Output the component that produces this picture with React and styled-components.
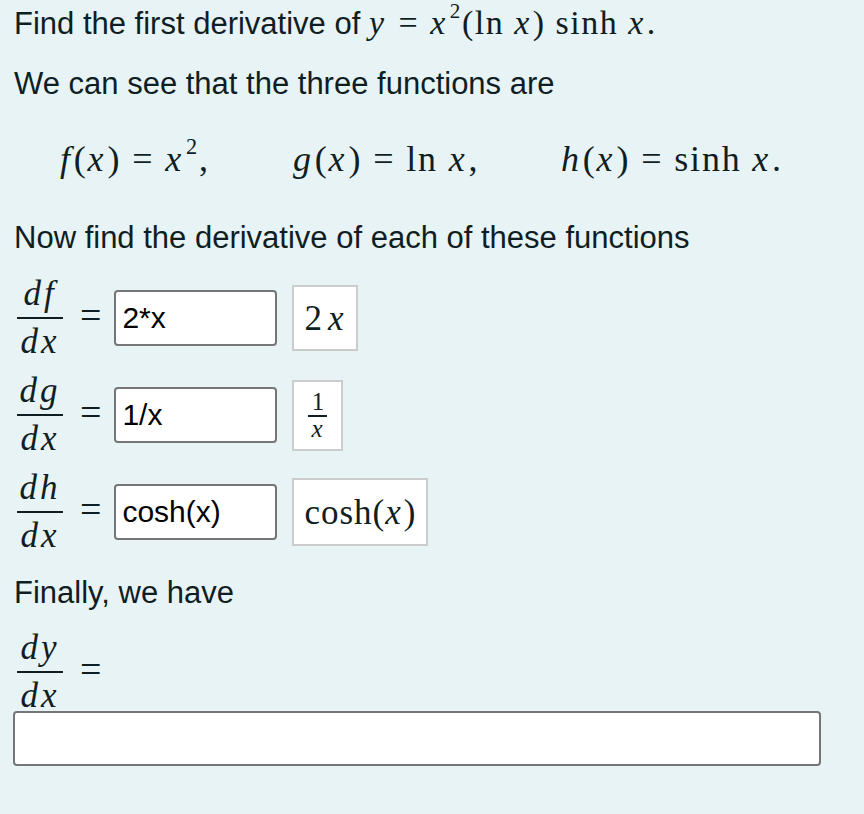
import React from "react";
import styled, { createGlobalStyle } from "styled-components";

const GlobalStyle = createGlobalStyle`
  html, body {
    margin: 0;
    padding: 0;
    background: #e8f3f5;
  }
  body {
    font-family: "Liberation Sans", Arial, sans-serif;
    color: #0f1e23;
  }
`;

const Page = styled.main`
  padding: 4px 14px 0 14px;
  min-height: 814px;
  box-sizing: border-box;
`;

const Para = styled.p`
  margin: ${(p) => p.$mt || 0}px 0 0 0;
  font-size: 31px;
  line-height: 40px;
  white-space: nowrap;
`;

const MathSpan = styled.span`
  font-family: "Liberation Serif", "Times New Roman", serif;
  font-size: 34px;
  line-height: 1;
  letter-spacing: 1.5px;
  white-space: nowrap;
`;

const Mi = styled.span`
  font-style: italic;
  padding-right: 2px;
`;

const Mo = styled.span`
  margin: 0 ${(p) => (p.$space == null ? 11 : p.$space)}px;
`;

const Sup = styled.span`
  font-size: 0.62em;
  vertical-align: 0.75em;
  line-height: 0;
  margin-left: 1px;
`;

const DisplayRow = styled.div`
  margin-top: 25px;
  height: 60px;
  padding-left: 46px;
  display: grid;
  grid-template-columns: 233px 268px auto;
  align-items: center;
  font-family: "Liberation Serif", "Times New Roman", serif;
  font-size: 36px;
  letter-spacing: 1.8px;
  line-height: 60px;
  white-space: nowrap;
`;

const Rows = styled.div`
  margin-top: 14px;
  display: flex;
  flex-direction: column;
  gap: 5px;
`;

const Row = styled.div`
  display: flex;
  align-items: center;
  height: ${(p) => p.$h || 92}px;
  margin-top: ${(p) => p.$mt || 0}px;
`;

const Frac = styled.span`
  display: inline-flex;
  flex-direction: column;
  align-items: center;
  min-width: 46px;
  margin-left: 3px;
  font-family: "Liberation Serif", "Times New Roman", serif;
  font-style: italic;
  font-size: 35px;
  letter-spacing: 3px;
`;

const FracPart = styled.span`
  line-height: 40px;
  white-space: nowrap;
`;

const Bar = styled.span`
  align-self: stretch;
  height: 2px;
  margin: 3px 0;
  background: #0f1e23;
`;

const Equals = styled.span`
  margin-left: 17px;
  padding-bottom: 6px;
  font-family: "Liberation Serif", "Times New Roman", serif;
  font-size: 38px;
  line-height: 40px;
`;

const Field = styled.input`
  box-sizing: border-box;
  width: ${(p) => p.$w || 163}px;
  height: ${(p) => p.$hgt || 56}px;
  margin-left: ${(p) => (p.$ml == null ? 13 : p.$ml)}px;
  padding: 0 6px;
  border: 2px solid #767676;
  border-radius: 4px;
  background: #ffffff;
  color: #000000;
  font-family: "Liberation Sans", Arial, sans-serif;
  font-size: 30px;
  outline: none;
`;

const Preview = styled.span`
  box-sizing: border-box;
  display: inline-flex;
  align-items: center;
  justify-content: center;
  height: ${(p) => p.$h || 66}px;
  margin-left: 15px;
  padding: 0 ${(p) => (p.$px == null ? 10 : p.$px)}px;
  border: 2px solid #cccccc;
  background: #ffffff;
  font-family: "Liberation Serif", "Times New Roman", serif;
  font-size: 35px;
  letter-spacing: 1px;
  line-height: 1;
  white-space: nowrap;
`;

const SmallFrac = styled.span`
  display: inline-flex;
  flex-direction: column;
  align-items: center;
  min-width: 19px;
  font-size: 25px;
  letter-spacing: 0;
`;

const SmallPart = styled.span`
  line-height: 21px;
`;

const SmallBar = styled.span`
  align-self: stretch;
  height: 2px;
  margin: 3px 0 1px;
  background: #0f1e23;
`;

const BigField = styled(Field)`
  display: block;
`;

function DerivRow({ top, value, children, previewH, previewPx }) {
  return (
    <Row>
      <Frac>
        <FracPart>{top}</FracPart>
        <Bar />
        <FracPart>dx</FracPart>
      </Frac>
      <Equals>=</Equals>
      <Field value={value} readOnly />
      <Preview $h={previewH} $px={previewPx}>
        {children}
      </Preview>
    </Row>
  );
}

export default function App() {
  return (
    <>
      <GlobalStyle />
      <Page>
        <Para>
          Find the first derivative of{" "}
          <MathSpan>
            <Mi>y</Mi>
            <Mo>=</Mo>
            <Mi>x</Mi>
            <Sup>2</Sup>
            <span>(ln </span>
            <Mi>x</Mi>
            <span>)</span> sinh <Mi>x</Mi>.
          </MathSpan>
        </Para>
        <Para $mt={20}>We can see that the three functions are</Para>
        <DisplayRow>
          <span>
            <Mi>f</Mi>(<Mi>x</Mi>)<Mo>=</Mo>
            <Mi>x</Mi>
            <Sup>2</Sup>,
          </span>
          <span>
            <Mi>g</Mi>(<Mi>x</Mi>)<Mo>=</Mo>ln <Mi>x</Mi>,
          </span>
          <span>
            <Mi>h</Mi>(<Mi>x</Mi>)<Mo>=</Mo>sinh <Mi>x</Mi>.
          </span>
        </DisplayRow>
        <Para $mt={29}>Now find the derivative of each of these functions</Para>
        <Rows>
          <DerivRow top="df" value="2*x" previewH={66}>
            2<Mi style={{ marginLeft: 5 }}>x</Mi>
          </DerivRow>
          <DerivRow top="dg" value="1/x" previewH={71} previewPx={14}>
            <SmallFrac>
              <SmallPart>1</SmallPart>
              <SmallBar />
              <SmallPart>
                <Mi>x</Mi>
              </SmallPart>
            </SmallFrac>
          </DerivRow>
          <DerivRow top="dh" value="cosh(x)" previewH={68}>
            cosh(<Mi>x</Mi>)
          </DerivRow>
        </Rows>
        <Para $mt={15}>Finally, we have</Para>
        <Row $h={78} $mt={20}>
          <Frac>
            <FracPart>dy</FracPart>
            <Bar />
            <FracPart>dx</FracPart>
          </Frac>
          <Equals>=</Equals>
        </Row>
        <BigField $w={808} $hgt={55} $ml={-1} value="" readOnly />
      </Page>
    </>
  );
}
